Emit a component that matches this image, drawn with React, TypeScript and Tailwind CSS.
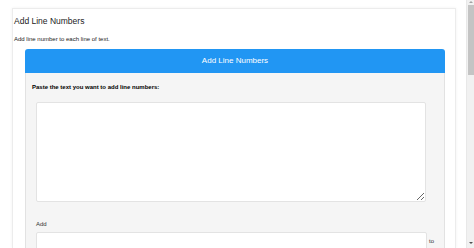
import React from "react";

function Scrollbar() {
  return (
    <div className="flex h-full w-[8px] flex-col items-center border-l border-[#e8e8e8] bg-[#f1f1f1] pt-[1px] pb-[4px]">
      <div className="h-0 w-0 border-x-[2px] border-b-[2px] border-x-transparent border-b-[#a3a3a3]" />
      <div className="mt-[2px] h-[70px] w-[6px] bg-[#c4c4c4]" />
      <div className="flex-1" />
      <div className="h-0 w-0 border-x-[2px] border-t-[2px] border-x-transparent border-t-[#505050]" />
    </div>
  );
}

export default function App() {
  return (
    <div
      className="flex h-[248px] w-full overflow-hidden bg-white text-[#222]"
      style={{ fontFamily: '"Liberation Sans", Arial, sans-serif' }}
    >
      <div className="flex-1 pl-[12px] pr-[10px] pt-[8px]">
        <div className="h-full border-x border-t border-[#ececec] pl-[1px] shadow-[0_0_3px_rgba(0,0,0,0.06)]">
          <h1 className="pt-[7px] text-[8.5px] leading-[10px] font-normal text-[#222]">
            Add Line Numbers
          </h1>
          <p className="mt-[10px] text-[6px] leading-[7px]">
            Add line number to each line of text.
          </p>
          <div className="ml-[11px] mr-[10px] mt-[6px]">
            <div className="flex h-[24px] items-center justify-center rounded-t-[3px] bg-[#2196f3] text-[8px] text-white">
              Add Line Numbers
            </div>
            <div className="flex h-[200px] flex-col border-x border-[#e2e2e2] bg-[#f5f5f5] pl-[6px] pr-[18px] pt-[11px]">
              <p className="text-[6px] leading-[7px] font-bold text-black">
                Paste the text you want to add line numbers:
              </p>
              <textarea
                readOnly
                className="ml-[4px] mt-[11px] h-[100px] resize-y rounded-[2px] border border-[#e3e3e3] bg-white outline-none"
              />
              <p className="ml-[4px] mt-[19px] text-[6px] leading-[7px] text-[#333]">Add</p>
              <div className="-mr-[8px] ml-[4px] mt-[4px] flex items-start">
                <input
                  readOnly
                  className="h-[30px] flex-1 rounded-[2px] border border-[#e3e3e3] bg-white outline-none"
                />
                <span className="ml-[2px] mt-[6px] text-[6px] leading-[7px] text-[#333]">to</span>
              </div>
            </div>
          </div>
        </div>
      </div>
      <Scrollbar />
    </div>
  );
}
